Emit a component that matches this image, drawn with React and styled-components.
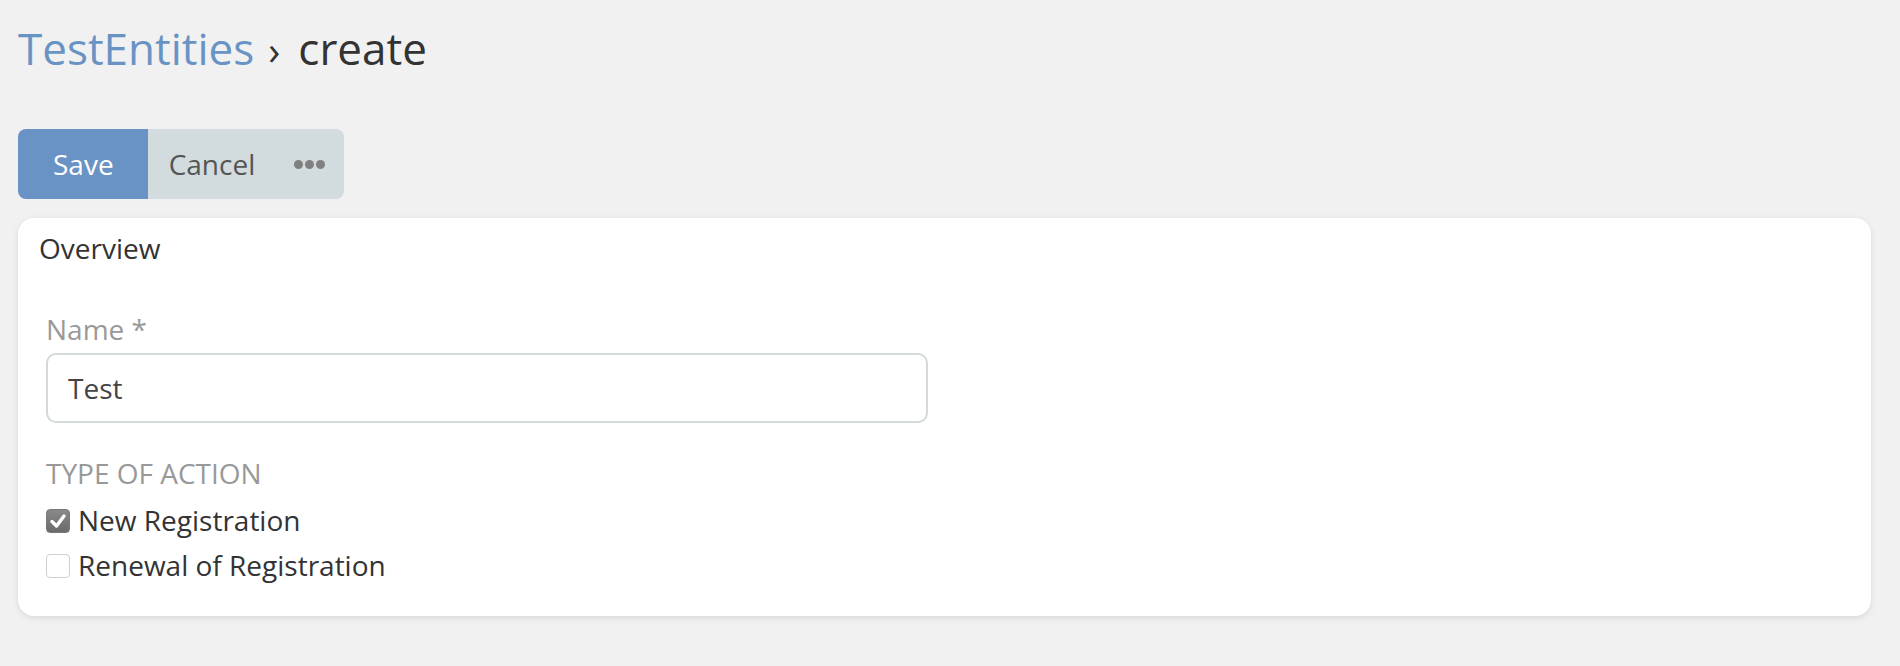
import React from "react";
import styled, { createGlobalStyle } from "styled-components";

const Global = createGlobalStyle`
  html, body { margin: 0; padding: 0; background: #f1f1f1; }
  body { font-family: "Open Sans", "Liberation Sans", sans-serif; color: #333; }
  * { box-sizing: border-box; }
`;

const Page = styled.div`
  padding: 18px 29px 50px 18px;
`;

const Breadcrumb = styled.h1`
  margin: 0;
  font-size: 44px;
  font-weight: 400;
  line-height: 60px;
  display: flex;
  align-items: baseline;
`;

const Crumb = styled.a`
  color: #6a93c5;
  text-decoration: none;
`;

const Sep = styled.span`
  color: #333;
  font-size: 40px;
  margin: 0 18px 0 14px;
`;

const Current = styled.span`
  color: #333;
`;

const Toolbar = styled.div`
  display: inline-flex;
  margin-top: 49px;
  height: 70px;
  border-radius: 8px;
  overflow: hidden;
`;

const Button = styled.button`
  border: 0;
  margin: 0;
  font-family: inherit;
  font-size: 28px;
  display: flex;
  align-items: center;
  cursor: pointer;
  background: ${(p) => (p.$primary ? "#6993c5" : "#d2dbdd")};
  color: ${(p) => (p.$primary ? "#fff" : "#555")};
  padding: ${(p) => (p.$primary ? "0 34px 0 35px" : "0 20px 0 21px")};
`;

const MoreButton = styled.button`
  border: 0;
  margin: 0;
  background: #d2dbdd;
  display: flex;
  align-items: center;
  gap: 2px;
  padding: 0 19px 0 19px;
  cursor: pointer;
`;

const Dot = styled.span`
  width: 9px;
  height: 9px;
  border-radius: 50%;
  background: #808080;
`;

const Card = styled.section`
  margin-top: 19px;
  background: #fff;
  border-radius: 16px;
  box-shadow: 0 2px 6px rgba(0, 0, 0, 0.1);
  padding: 10px 21px 28px 21px;
`;

const CardTitle = styled.h2`
  margin: 0;
  font-size: 28px;
  font-weight: 400;
  line-height: 40px;
  color: #333;
`;

const Fields = styled.div`
  padding: 43px 7px 0 7px;
`;

const Label = styled.label`
  display: block;
  font-size: 28px;
  line-height: 36px;
  color: #999;
`;

const Input = styled.input`
  display: block;
  margin-top: 6px;
  width: 882px;
  height: 70px;
  border: 2px solid #d4d9d9;
  border-radius: 10px;
  padding: 0 20px;
  font-family: inherit;
  font-size: 28px;
  color: #444;
  outline: none;
`;

const SectionLabel = styled.div`
  margin: 32px 0 7px;
  font-size: 28px;
  line-height: 36px;
  color: #999;
  text-transform: uppercase;
`;

const CheckRow = styled.label`
  display: flex;
  align-items: center;
  gap: 8px;
  font-size: 28px;
  line-height: 45px;
  color: #333;
`;

const Box = styled.span`
  width: 24px;
  height: 24px;
  border-radius: 4px;
  display: flex;
  align-items: center;
  justify-content: center;
  background: ${(p) => (p.$checked ? "linear-gradient(#8a8a8a, #6a6a6a)" : "#fff")};
  border: 1px solid ${(p) => (p.$checked ? "#777" : "#cfcfcf")};
`;

const Check = ({ checked, children }) => (
  <CheckRow>
    <Box $checked={checked}>
      {checked && (
        <svg width="20" height="20" viewBox="0 0 20 20">
          <path d="M4 10.5 L8.5 15 L16 5" fill="none" stroke="#fff" strokeWidth="3.4" strokeLinecap="round" strokeLinejoin="round" />
        </svg>
      )}
    </Box>
    {children}
  </CheckRow>
);

export default function App() {
  return (
    <>
      <Global />
      <Page>
        <Breadcrumb>
          <Crumb href="#">TestEntities</Crumb>
          <Sep>›</Sep>
          <Current>create</Current>
        </Breadcrumb>
        <Toolbar>
          <Button $primary>Save</Button>
          <Button>Cancel</Button>
          <MoreButton aria-label="More">
            <Dot />
            <Dot />
            <Dot />
          </MoreButton>
        </Toolbar>
        <Card>
          <CardTitle>Overview</CardTitle>
          <Fields>
            <Label>Name *</Label>
            <Input defaultValue="Test" />
            <SectionLabel>Type of Action</SectionLabel>
            <Check checked>New Registration</Check>
            <Check>Renewal of Registration</Check>
          </Fields>
        </Card>
      </Page>
    </>
  );
}
